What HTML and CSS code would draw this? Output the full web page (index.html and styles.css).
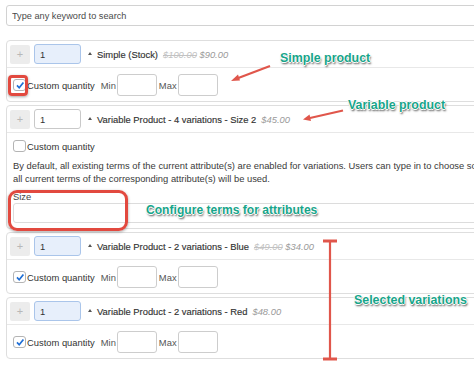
FILE: index.html
```html
<!DOCTYPE html>
<html lang="en">
<head>
    <meta charset="UTF-8">
    <meta name="viewport" content="width=device-width, initial-scale=1.0">
    <title>Product bundle items</title>
    <link rel="stylesheet" href="styles.css">
</head>
<body>
    <div class="page">
        <input class="search" type="text" placeholder="Type any keyword to search">

        <div class="list">
            <div class="item">
                <div class="item-head">
                    <span class="drag">+</span>
                    <input class="qty" type="text" value="1">
                    <span class="caret"></span>
                    <span class="title">Simple (Stock)</span>
                    <span class="price"><del>$100.00</del> $90.00</span>
                </div>
                <div class="item-body">
                    <div class="qty-row">
                        <span class="check"><svg viewBox="0 0 10 10"><path d="M2 5.4 L4.2 7.8 L8.4 2.4"/></svg></span>
                        <span class="label">Custom quantity</span>
                        <span class="mm">Min</span><input class="box" type="text">
                        <span class="mm max">Max</span><input class="box" type="text">
                    </div>
                </div>
            </div>

            <div class="item">
                <div class="item-head">
                    <span class="drag">+</span>
                    <input class="qty plain" type="text" value="1">
                    <span class="caret"></span>
                    <span class="title">Variable Product - 4 variations - Size 2</span>
                    <span class="price">$45.00</span>
                </div>
                <div class="item-body">
                    <div class="qty-row short">
                        <span class="check off"></span>
                        <span class="label">Custom quantity</span>
                    </div>
                    <p class="note">By default, all existing terms of the current attribute(s) are enabled for variations. Users can type in to choose some of them, otherwise<br>all current terms of the corresponding attribute(s) will be used.</p>
                    <label class="attr-label">Size</label>
                    <input class="attr-input" type="text">
                </div>
            </div>

            <div class="item">
                <div class="item-head">
                    <span class="drag">+</span>
                    <input class="qty" type="text" value="1">
                    <span class="caret"></span>
                    <span class="title">Variable Product - 2 variations - Blue</span>
                    <span class="price"><del>$49.00</del> $34.00</span>
                </div>
                <div class="item-body">
                    <div class="qty-row">
                        <span class="check"><svg viewBox="0 0 10 10"><path d="M2 5.4 L4.2 7.8 L8.4 2.4"/></svg></span>
                        <span class="label">Custom quantity</span>
                        <span class="mm">Min</span><input class="box" type="text">
                        <span class="mm max">Max</span><input class="box" type="text">
                    </div>
                </div>
            </div>

            <div class="item">
                <div class="item-head">
                    <span class="drag">+</span>
                    <input class="qty" type="text" value="1">
                    <span class="caret"></span>
                    <span class="title">Variable Product - 2 variations - Red</span>
                    <span class="price">$48.00</span>
                </div>
                <div class="item-body">
                    <div class="qty-row">
                        <span class="check"><svg viewBox="0 0 10 10"><path d="M2 5.4 L4.2 7.8 L8.4 2.4"/></svg></span>
                        <span class="label">Custom quantity</span>
                        <span class="mm">Min</span><input class="box" type="text">
                        <span class="mm max">Max</span><input class="box" type="text">
                    </div>
                </div>
            </div>
        </div>

        <!-- callouts drawn over the screenshot -->
        <div class="notes">
            <span class="ring ring-check"></span>
            <span class="ring ring-size"></span>
            <span class="tag tag-simple">Simple product</span>
            <span class="tag tag-variable">Variable product</span>
            <span class="tag tag-terms">Configure terms for attributes</span>
            <span class="tag tag-selected">Selected variations</span>
            <svg class="marks" width="474" height="370" viewBox="0 0 474 370">
                <line x1="270" y1="66" x2="237" y2="78.5"/>
                <polygon points="231,81 238,74.5 240,80.5"/>
                <line x1="343" y1="110.5" x2="310" y2="118"/>
                <polygon points="303,119.5 309.5,114.5 311,121"/>
                <line x1="330" y1="241" x2="330" y2="359"/>
                <line class="cap" x1="323" y1="241" x2="337" y2="241"/>
                <line class="cap" x1="323" y1="359" x2="337" y2="359"/>
            </svg>
        </div>
    </div>
</body>
</html>
```

FILE: styles.css
```css
body {
    margin: 0;
    background: #fff;
    color: #333;
    font-family: "Liberation Sans", Arial, sans-serif;
    font-size: 9.4px;
    overflow: hidden;
}
input {
    font-family: "Liberation Sans", Arial, sans-serif;
    font-size: 9.4px;
    color: #333;
    outline: none;
    margin: 0;
}
.page {
    position: relative;
    width: 640px;
    height: 370px;
    padding: 5px 0 0 6px;
    box-sizing: border-box;
}
.search {
    display: block;
    width: 100%;
    height: 21px;
    box-sizing: border-box;
    border: 1px solid #d2d2d2;
    border-radius: 3px;
    padding: 0 5px;
    font-size: 9.2px;
}
.search::placeholder {
    color: #4a4a4a;
}
.list {
    margin-top: 14px;
    display: flex;
    flex-direction: column;
    gap: 3px;
}
.item {
    border: 1px solid #dedede;
    border-radius: 4px;
}
.item-head {
    display: flex;
    align-items: center;
    padding: 3px;
    border-bottom: 1px solid #e8e8e8;
}
.drag {
    width: 20px;
    height: 19px;
    display: flex;
    align-items: center;
    justify-content: center;
    background: #ececec;
    color: #b8b8b8;
    font-size: 11px;
    border-radius: 2px;
}
.qty {
    width: 47px;
    height: 20px;
    box-sizing: border-box;
    margin-left: 4px;
    padding: 0 5px;
    border: 1px solid #aac5ea;
    border-radius: 3px;
    background: #e7effb;
}
.qty.plain {
    background: #fff;
    border-color: #c9c9c9;
}
.caret {
    margin: 0 5px 1px 7px;
    border-left: 2px solid transparent;
    border-right: 2px solid transparent;
    border-bottom: 3px solid #555;
}
.title {
    color: #333;
    -webkit-text-stroke: 0.15px #333;
}
.price {
    margin-left: 5px;
    font-style: italic;
    color: #9a9a9a;
}
.price del {
    color: #c2c2c2;
}
.item-body {
    padding: 6px 6px 5px;
}
.qty-row {
    display: flex;
    align-items: center;
    height: 22px;
}
.qty-row.short {
    height: 14px;
}
.check {
    width: 13px;
    height: 12px;
    box-sizing: border-box;
    margin-right: 1px;
    border: 1px solid #b4b4b4;
    border-radius: 3px;
    background: #fff;
    display: flex;
    align-items: center;
    justify-content: center;
}
.check svg {
    width: 10px;
    height: 10px;
    fill: none;
    stroke: #1f6fd6;
    stroke-width: 1.7;
}
.label {
    color: #333;
}
.mm {
    margin: 0 1px 0 6px;
    color: #555;
}
.mm.max {
    margin-left: 2px;
}
.box {
    width: 40px;
    height: 22px;
    box-sizing: border-box;
    border: 1px solid #cdcdcd;
    border-radius: 3px;
    background: #fff;
}
.note {
    margin: 6px 0 0;
    line-height: 13px;
    color: #3a3a3a;
    white-space: nowrap;
}
.attr-label {
    display: block;
    margin-top: 6px;
    line-height: 12px;
    color: #444;
}
.attr-input {
    display: block;
    width: 100%;
    height: 20px;
    box-sizing: border-box;
    border: 1px solid #dcdcdc;
    border-radius: 3px;
}
.notes {
    position: absolute;
    left: 0;
    top: 0;
    width: 474px;
    height: 370px;
    pointer-events: none;
}
.ring {
    position: absolute;
    box-sizing: border-box;
    border: 3px solid #e2493f;
    box-shadow: 0 1px 3px rgba(0, 0, 0, 0.35);
}
.ring-check {
    left: 8px;
    top: 75px;
    width: 20px;
    height: 21px;
    border-radius: 4px;
}
.ring-size {
    left: 8px;
    top: 190px;
    width: 120px;
    height: 41px;
    border-radius: 9px;
}
.tag {
    position: absolute;
    line-height: 14px;
    font-size: 12.4px;
    font-weight: bold;
    color: #18a58a;
    white-space: nowrap;
    text-shadow: -1px 0 #fff, 1px 0 #fff, 0 -1px #fff, 0 1px #fff, 1px 2px 2px rgba(0, 0, 0, 0.7);
}
.tag-simple {
    left: 280px;
    top: 51px;
}
.tag-variable {
    left: 348px;
    top: 98px;
}
.tag-terms {
    left: 146px;
    top: 203px;
    font-size: 12.1px;
}
.tag-selected {
    left: 354px;
    top: 293px;
}
.marks {
    position: absolute;
    left: 0;
    top: 0;
}
.marks line {
    stroke: #e0564b;
    stroke-width: 2.2;
}
.marks line.cap {
    stroke-width: 3;
}
.marks polygon {
    fill: #e0564b;
}
```
